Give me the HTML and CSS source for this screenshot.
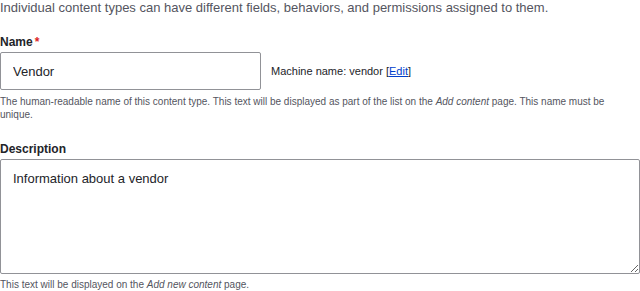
FILE: index.html
```html
<!DOCTYPE html>
<html>
<head>
<meta charset="UTF-8"/>
<title>Add content type</title>
<link rel="stylesheet" href="styles.css">
</head>
<body>
<p class="intro">Individual content types can have different fields, behaviors, and permissions assigned to them.</p>
<div class="formItem">
	<label class="fieldLabel" for="name">Name<span class="required">*</span></label>
	<div class="nameRow">
		<input id="name" class="textField" type="text" value="Vendor"/>
		<span class="machineName">Machine name: vendor [<a href="#">Edit</a>]</span>
	</div>
	<div class="description">The human-readable name of this content type. This text will be displayed as part of the list on the <em>Add content</em> page. This name must be unique.</div>
</div>
<div class="formItem">
	<label class="fieldLabel" for="desc">Description</label>
	<textarea id="desc" class="textArea">Information about a vendor</textarea>
	<div class="description last">This text will be displayed on the <em>Add new content</em> page.</div>
</div>
</body>
</html>
```

FILE: styles.css
```css
html, body { margin: 0; background: #fff; }
body { font-family: 'Liberation Sans', Arial, sans-serif; color: #232429; margin-top: -1px; }
.intro { margin: 0 0 17px; font-size: 13px; line-height: 18px; color: #545560; }
.formItem { margin-bottom: 20px; }
.fieldLabel { display: block; font-size: 12px; font-weight: bold; line-height: 16px; margin-bottom: 2px; }
.required { color: #dc2323; margin-left: 2px; }
.nameRow { display: flex; align-items: center; gap: 10px; }
.textField, .textArea {
	box-sizing: border-box;
	font-family: inherit; font-size: 13px; color: #232429;
	border: 1px solid #919297; border-radius: 2px;
	background: #fff; margin: 0;
}
.textField { width: 261px; height: 38px; padding: 0 12px; }
.textArea { display: block; width: 640px; height: 115px; padding: 10px 12px; line-height: 18px; }
.machineName { font-size: 11px; color: #232429; }
.machineName a { color: #003ecc; }
.description { margin-top: 5px; font-size: 10px; line-height: 13px; color: #545560; }
.description.last { margin-top: 4px; }
```
